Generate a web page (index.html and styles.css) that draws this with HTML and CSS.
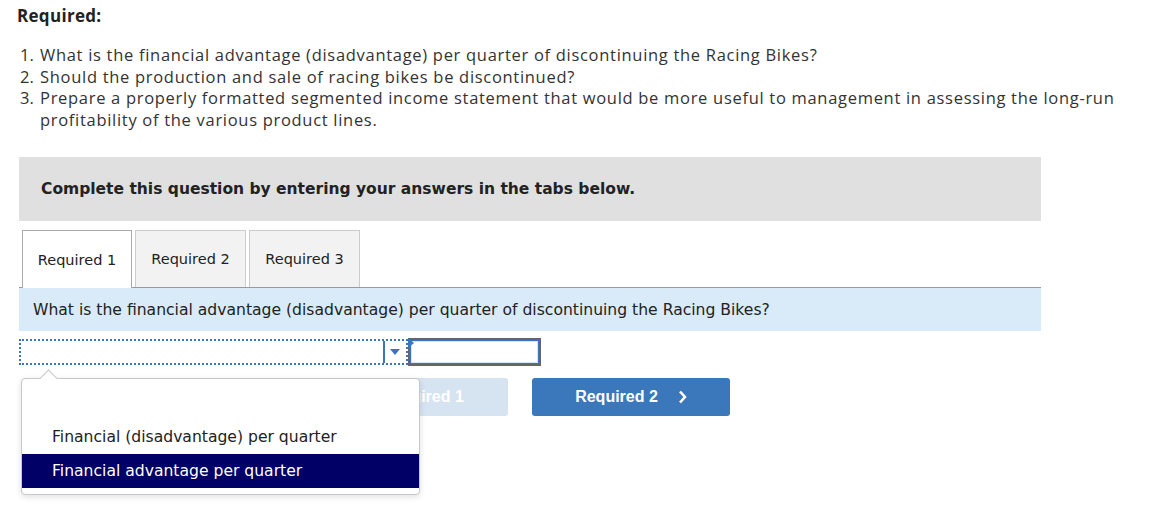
FILE: index.html
```html
<!DOCTYPE html>
<html>
<head>
<meta charset="utf-8">
<link rel="stylesheet" href="styles.css">
</head>
<body>
<div class="intro">
  <div class="req-title">Required:</div>
  <ol class="req-list">
    <li><span class="num">1.</span><span class="txt">What is the financial advantage (disadvantage) per quarter of discontinuing the Racing Bikes?</span></li>
    <li><span class="num">2.</span><span class="txt">Should the production and sale of racing bikes be discontinued?</span></li>
    <li><span class="num">3.</span><span class="txt">Prepare a properly formatted segmented income statement that would be more useful to management in assessing the long-run profitability of the various product lines.</span></li>
  </ol>
</div>
<div class="main">
  <div class="instr">Complete this question by entering your answers in the tabs below.</div>
  <div class="tabs">
    <div class="tab active">Required 1</div>
    <div class="tab">Required 2</div>
    <div class="tab">Required 3</div>
  </div>
  <div class="question">What is the financial advantage (disadvantage) per quarter of discontinuing the Racing Bikes?</div>
  <div class="answer-row">
    <div class="select">
      <div class="select-val"></div>
      <div class="select-btn"><span class="caret"></span></div>
    </div>
    <div class="input"><span class="flag"></span></div>
  </div>
  <div class="nav-row">
    <div class="btn prev"><svg class="chev-l" width="9" height="14" viewBox="0 0 9 14"><polyline points="7,1.5 2,7 7,12.5" fill="none" stroke="#fff" stroke-width="2.6"/></svg>Required 1</div>
    <div class="btn next">Required 2<svg class="chev-r" width="9" height="14" viewBox="0 0 9 14"><polyline points="2,1.5 7,7 2,12.5" fill="none" stroke="#fff" stroke-width="2.6"/></svg></div>
  </div>
  <div class="popup">
    <div class="opt empty"></div>
    <div class="opt">Financial (disadvantage) per quarter</div>
    <div class="opt sel">Financial advantage per quarter</div>
  </div>
</div>
</body>
</html>
```
FILE: styles.css
```css
html, body { margin: 0; padding: 0; background: #fff; }
body { width: 1156px; height: 522px; overflow: hidden; position: relative; }

.intro { font-family: "Open Sans", "Lato", sans-serif; color: #333; padding: 6px 0 0 17px; }
.req-title { font-weight: 700; font-size: 17px; line-height: 20px; color: #222; letter-spacing: 0.3px; }
.req-list { list-style: none; margin: 18px 0 0 0; padding: 0; font-size: 16.5px; line-height: 21.5px; letter-spacing: 0.7px; }
.req-list li { display: flex; }
.req-list .num { width: 23px; flex: none; padding-left: 3px; box-sizing: border-box; letter-spacing: 0; }
.req-list .txt { width: 1080px; }

.main { position: relative; margin: 27px 0 0 19px; width: 1022px; font-family: "DejaVu Sans", Verdana, sans-serif; color: #222; }
.instr { background: #e0e0e0; height: 64px; box-sizing: border-box; padding: 0 0 0 22px; display: flex; align-items: center; font-weight: 700; font-size: 15.5px; }

.tabs { display: flex; gap: 3px; margin-top: 9px; padding-left: 3px; border-bottom: 1px solid #999; height: 57px; }
.tab { width: 111px; height: 57px; box-sizing: border-box; border: 1px solid #ccc; border-bottom: none; background: #f2f2f2; display: flex; align-items: center; justify-content: center; font-size: 14.5px; color: #222; }
.tab.active { background: #fff; border-color: #aaa; height: 58px; margin-bottom: -1px; width: 110px; }

.question { background: #d9ebf9; height: 43px; display: flex; align-items: center; padding-left: 14px; font-size: 15.6px; color: #222; }

.answer-row { display: flex; margin-top: 7px; height: 28px; align-items: center; }
.select { width: 389px; height: 26px; box-sizing: border-box; border: 2px dotted #3a75c4; display: flex; }
.select-val { flex: 1; }
.select-btn { width: 21px; border-left: 2px solid #3a75c4; position: relative; }
.caret { position: absolute; left: 5px; top: 8px; width: 0; height: 0; border-left: 5px solid transparent; border-right: 5px solid transparent; border-top: 6px solid #3a75c4; }
.input { position: relative; width: 133px; height: 28px; box-sizing: border-box; border: 2px solid #666; box-shadow: inset 0 0 0 1px #3a75c4, inset 0 0 0 2px #d6e6fa; }
.flag { position: absolute; left: -2px; top: -2px; width: 0; height: 0; border-top: 5px solid transparent; border-bottom: 5px solid transparent; border-left: 6px solid #3a75c4; }

.nav-row { display: flex; gap: 24px; margin-top: 12px; padding-left: 291px; }
.btn { width: 198px; height: 38px; border-radius: 3px; display: flex; align-items: center; justify-content: center; font-family: "Liberation Sans", Arial, sans-serif; font-weight: 700; font-size: 16px; color: #fff; }
.btn.prev { background: #d6e3f1; }
.btn.next { background: #3b78bb; }
.chev-l { margin-right: 18px; }
.chev-r { margin-left: 20px; }

.popup { position: absolute; left: 2px; top: 221px; width: 399px; box-sizing: border-box; background: #fff; border: 1px solid #c8c8c8; border-radius: 4px; box-shadow: 0 2px 6px rgba(0,0,0,0.12); padding: 7px 0 6px 0; }
.popup::before { content: ""; position: absolute; left: 20px; top: -7px; width: 12px; height: 12px; background: #fff; border-left: 1px solid #c8c8c8; border-top: 1px solid #c8c8c8; transform: rotate(45deg); }
.opt { height: 34px; display: flex; align-items: center; padding-left: 30px; font-size: 15.6px; color: #222; }
.opt.sel { background: #000066; color: #fff; }
```
